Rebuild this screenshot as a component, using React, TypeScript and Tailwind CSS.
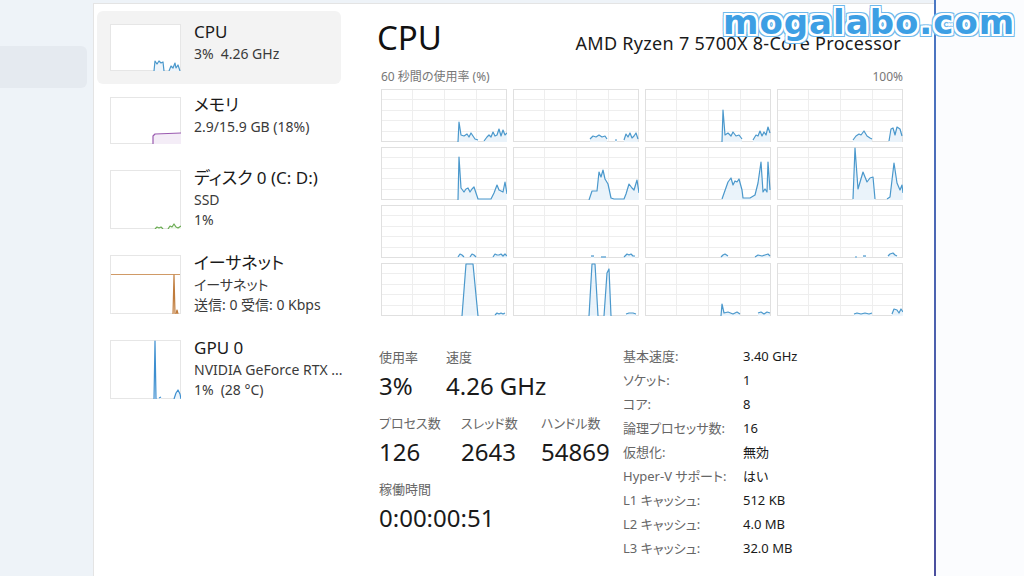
import React from 'react'

type Pt = [number, number]
type Seg = Pt[]

// per-core history, cell space 126 x 53 (y = 53 is 0%)
const CORES: Seg[][] = [
  [
    [[77, 53], [78, 33], [80, 46], [83, 47], [86, 45], [88, 48], [90, 44], [92, 47], [94, 50], [97, 51]],
    [[103, 52], [106, 48], [108, 46], [110, 48], [112, 43], [114, 47], [116, 46], [118, 40], [120, 47], [122, 41], [124, 46], [126, 44]],
  ],
  [
    [[77, 50], [80, 47], [83, 48], [86, 46], [89, 48], [92, 47], [94, 50]],
    [[102, 51], [104, 51]],
    [[111, 51], [113, 45], [115, 48], [117, 44], [119, 49], [121, 47], [123, 44], [125, 50]],
  ],
  [
    [[77, 53], [78, 21], [80, 46], [83, 44], [86, 47], [88, 43], [91, 47], [94, 46], [97, 50]],
    [[108, 51], [111, 46], [113, 47], [115, 42], [117, 47], [119, 43], [121, 46], [123, 38], [125, 44]],
  ],
  [
    [[76, 51], [79, 47], [82, 45], [84, 46], [87, 42], [90, 47], [93, 49], [95, 50]],
    [[112, 52], [114, 40], [116, 39], [118, 46], [120, 38], [123, 40], [125, 47]],
  ],
  [
    [[77, 53], [78, 10], [80, 41], [83, 45], [85, 42], [87, 41], [89, 45], [91, 42], [93, 40], [95, 46], [97, 52], [110, 52], [113, 46], [116, 38], [118, 43], [120, 44], [122, 45], [124, 35], [126, 47]],
  ],
  [
    [[76, 53], [79, 44], [84, 44], [86, 25], [88, 30], [90, 23], [92, 32], [95, 37], [98, 51], [101, 52], [111, 52], [113, 47], [116, 37], [119, 41], [121, 43], [124, 33], [126, 46]],
  ],
  [
    [[77, 52], [83, 35], [86, 31], [88, 38], [90, 34], [92, 35], [94, 32], [97, 43], [98, 51], [105, 51], [110, 48], [113, 36], [116, 15], [118, 45], [120, 42], [122, 45], [123, 15], [125, 43]],
  ],
  [
    [[76, 52], [78, 1], [81, 42], [86, 25], [90, 35], [93, 31], [96, 30], [98, 52]],
    [[110, 52], [113, 50], [117, 16], [120, 36], [123, 43], [125, 38], [126, 46]],
  ],
  [
    [[77, 52], [79, 49], [81, 50], [83, 52]],
    [[89, 52], [91, 49], [93, 50], [95, 52]],
    [[112, 52], [114, 49], [116, 50], [118, 50], [120, 49], [122, 51], [124, 49], [126, 51]],
  ],
  [
    [[78, 51], [81, 51]],
    [[88, 52], [93, 52]],
    [[111, 52], [114, 49], [116, 50], [118, 49], [120, 51], [122, 51]],
  ],
  [
    [[76, 52], [78, 50], [80, 49], [83, 51]],
    [[110, 52], [113, 50], [117, 51], [120, 50], [123, 49], [125, 51]],
  ],
  [
    [[78, 52], [80, 52]],
    [[86, 51], [89, 51]],
    [[111, 51], [113, 49], [116, 48], [118, 50], [120, 51]],
  ],
  [
    [[81, 53], [85, 1], [92, 1], [97, 53]],
    [[114, 52], [116, 50], [118, 51], [120, 50], [122, 51], [124, 50]],
  ],
  [
    [[76, 53], [79, 1], [82, 1], [85, 53]],
    [[91, 53], [94, 10], [96, 6], [98, 53]],
    [[113, 51], [116, 50], [120, 50], [123, 51]],
  ],
  [
    [[76, 53], [77, 41], [79, 50], [83, 49], [88, 51], [92, 49], [95, 51]],
    [[113, 50], [116, 49], [119, 51], [122, 49], [125, 50]],
  ],
  [
    [[77, 51], [80, 50], [84, 51], [88, 50], [92, 51], [95, 50]],
    [[115, 51], [117, 46], [120, 47], [122, 50], [124, 46], [126, 49]],
  ],
]

function Trace({ segs, h, stroke, fill }: { segs: Seg[]; h: number; stroke: string; fill: string }) {
  return (
    <>
      {segs.map((s, i) => {
        const line = s.map((p) => p.join(',')).join(' ')
        const area = `${s[0][0]},${h} ${line} ${s[s.length - 1][0]},${h}`
        return (
          <g key={i}>
            <polygon points={area} fill={fill} />
            <polyline points={line} fill="none" stroke={stroke} strokeWidth={1.2} strokeLinejoin="round" />
          </g>
        )
      })}
    </>
  )
}

function CoreCell({ segs }: { segs: Seg[] }) {
  return (
    <svg width="126" height="53" viewBox="0 0 126 53" className="block">
      <rect x="0.5" y="0.5" width="125" height="52" fill="#fff" stroke="#e0e0e0" />
      {[31.5, 63.5, 95.5].map((x) => (
        <line key={x} x1={x} x2={x} y1="1" y2="52" stroke="#eeeeee" />
      ))}
      {[10.5, 21.5, 31.5, 42.5].map((y) => (
        <line key={y} x1="1" x2="125" y1={y} y2={y} stroke="#eeeeee" />
      ))}
      <Trace segs={segs} h={53} stroke="#4a98cc" fill="#eaf3fa" />
    </svg>
  )
}

interface Thumb {
  h: number
  stroke: string
  fill: string
  segs: Seg[]
  extra?: React.ReactNode
}

const ITEMS: { title: string; lines: React.ReactNode[]; thumb: Thumb; active?: boolean }[] = [
  {
    title: 'CPU',
    active: true,
    lines: [
      <span key="a" className="flex gap-[7px]">
        <span>3%</span>
        <span>4.26 GHz</span>
      </span>,
    ],
    thumb: {
      h: 47,
      stroke: '#4a98cc',
      fill: '#eef5fb',
      segs: [
        [[44, 47], [45, 37], [47, 40], [49, 37], [51, 39], [53, 38], [54, 47]],
        [[59, 47], [61, 42], [63, 44], [65, 39], [66, 44], [68, 41], [70, 47]],
      ],
    },
  },
  {
    title: 'メモリ',
    lines: ['2.9/15.9 GB (18%)'],
    thumb: {
      h: 47,
      stroke: '#9a5bb0',
      fill: '#f4edf7',
      segs: [[[43, 47], [43, 39], [45, 37], [71, 36]]],
    },
  },
  {
    title: 'ディスク 0 (C: D:)',
    lines: ['SSD', '1%'],
    thumb: {
      h: 59,
      stroke: '#6aab52',
      fill: '#f1f8ee',
      segs: [
        [[45, 59], [47, 57], [49, 58], [51, 57], [53, 59]],
        [[58, 59], [60, 56], [62, 57], [64, 54], [66, 57], [68, 58], [71, 56]],
      ],
    },
  },
  {
    title: 'イーサネット',
    lines: ['イーサネット', '送信: 0 受信: 0 Kbps'],
    thumb: {
      h: 59,
      stroke: '#c07c3c',
      fill: '#fbf3ec',
      segs: [
        [[63, 59], [64, 20], [65, 59]],
        [[66, 59], [67, 55], [68, 59]],
      ],
      extra: <line x1="1" x2="70" y1="19.5" y2="19.5" stroke="#d09a66" strokeWidth="1" />,
    },
  },
  {
    title: 'GPU 0',
    lines: [
      'NVIDIA GeForce RTX ...',
      <span key="g" className="flex gap-[7px]">
        <span>1%</span>
        <span>(28 °C)</span>
      </span>,
    ],
    thumb: {
      h: 59,
      stroke: '#3d8fd0',
      fill: '#eef5fb',
      segs: [
        [[44, 59], [45, 1], [46, 59]],
        [[49, 58], [51, 57]],
        [[64, 59], [66, 53], [68, 50], [70, 54], [71, 59]],
      ],
    },
  },
]

function SideItem({ item }: { item: (typeof ITEMS)[number] }) {
  const tall = item.thumb.h > 50
  return (
    <div
      className={`flex gap-[13px] rounded-md px-[13px] ${tall ? 'py-[12.5px]' : 'py-[13px]'} ${
        item.active ? 'bg-[#f3f3f3]' : ''
      }`}
    >
      <svg width="71" height={item.thumb.h} viewBox={`0 0 71 ${item.thumb.h}`} className="block shrink-0">
        <rect x="0.5" y="0.5" width="70" height={item.thumb.h - 1} fill="#fff" stroke="#e6e6e6" />
        {item.thumb.extra}
        <Trace segs={item.thumb.segs} h={item.thumb.h} stroke={item.thumb.stroke} fill={item.thumb.fill} />
      </svg>
      <div className="-mt-[4px] min-w-0">
        <div className="text-[17px] leading-[24px] text-[#1a1a1a]">{item.title}</div>
        {item.lines.map((l, i) => (
          <div key={i} className="whitespace-nowrap text-[14px] leading-[20px] text-[#3a3a3a]">
            {l}
          </div>
        ))}
      </div>
    </div>
  )
}

const SPECS: [string, string][] = [
  ['基本速度:', '3.40 GHz'],
  ['ソケット:', '1'],
  ['コア:', '8'],
  ['論理プロセッサ数:', '16'],
  ['仮想化:', '無効'],
  ['Hyper-V サポート:', 'はい'],
  ['L1 キャッシュ:', '512 KB'],
  ['L2 キャッシュ:', '4.0 MB'],
  ['L3 キャッシュ:', '32.0 MB'],
]

function Stat({ label, value, w }: { label: string; value: string; w: string }) {
  return (
    <div className={w}>
      <div className="text-[13px] leading-[22px] text-[#666]">{label}</div>
      <div className="whitespace-nowrap text-[24px] leading-[36px] text-[#1a1a1a]">{value}</div>
    </div>
  )
}

export default function App() {
  return (
    <div className="relative flex h-[576px] w-[1024px] overflow-hidden bg-[#eef3f8] font-['Noto_Sans','Noto_Sans_CJK_JP',sans-serif] [font-feature-settings:'palt']">
      {/* app nav rail */}
      <nav className="w-[93px] shrink-0 pt-[46px]">
        <div className="h-[42px] w-[87px] rounded-r-md bg-[#e5eaf0]" />
      </nav>

      {/* performance page */}
      <div className="mt-[3px] flex w-[841px] shrink-0 border-l border-t border-[#e4e4e4] bg-white">
        <aside className="w-[247px] shrink-0 pl-[3px] pt-[7px]">
          {ITEMS.map((it) => (
            <SideItem key={it.title} item={it} />
          ))}
        </aside>

        <main className="flex-1 pl-[40px] pt-[14px]">
          <div className="flex w-[522px] items-baseline justify-between">
            <h1 className="-ml-[4px] text-[33px] leading-[40px] text-[#111]">CPU</h1>
            <div className="pr-[2px] text-[18px] tracking-[0.3px] text-[#1a1a1a]">AMD Ryzen 7 5700X 8-Core Processor</div>
          </div>
          <div className="mt-[11px] flex w-[522px] justify-between text-[12px] leading-[16px] text-[#777]">
            <span>60 秒間の使用率 (%)</span>
            <span>100%</span>
          </div>
          <div className="mt-[4px] grid w-[522px] grid-cols-4 gap-x-[6px] gap-y-[5px]">
            {CORES.map((c, i) => (
              <CoreCell key={i} segs={c} />
            ))}
          </div>

          <div className="-ml-[2px] mt-[30px] flex">
            <div className="flex w-[244px] flex-col gap-[8px]">
              <div className="flex">
                <Stat label="使用率" value="3%" w="w-[67px]" />
                <Stat label="速度" value="4.26 GHz" w="w-[100px]" />
              </div>
              <div className="flex">
                <Stat label="プロセス数" value="126" w="w-[82px]" />
                <Stat label="スレッド数" value="2643" w="w-[80px]" />
                <Stat label="ハンドル数" value="54869" w="w-[80px]" />
              </div>
              <Stat label="稼働時間" value="0:00:00:51" w="w-[200px]" />
            </div>
            <div className="-mt-[2px] text-[13px] leading-[24px]">
              {SPECS.map(([k, v]) => (
                <div key={k} className="flex">
                  <span className="w-[120px] text-[#666]">{k}</span>
                  <span className="text-[#1a1a1a]">{v}</span>
                </div>
              ))}
            </div>
          </div>
        </main>
      </div>

      <div className="w-[2px] shrink-0 bg-gradient-to-b from-[#4a78c4] to-[#4b4f9e]" />
      <div className="flex-1 bg-[#fbfcfe]" />

      {/* site watermark */}
      <div className="absolute left-[723px] top-[5px] font-['DejaVu_Sans',sans-serif] text-[34px] font-bold leading-[34px] tracking-[1px] text-[#3d9fe4] [text-shadow:2px_0_0_#fff,-2px_0_0_#fff,0_2px_0_#fff,0_-2px_0_#fff,2px_2px_0_#fff,-2px_-2px_0_#fff,2px_-2px_0_#fff,-2px_2px_0_#fff,3px_0_0_#6fb9ec,-3px_0_0_#6fb9ec,0_3px_0_#6fb9ec,0_-3px_0_#6fb9ec,3px_3px_0_#6fb9ec,-3px_-3px_0_#6fb9ec,3px_-3px_0_#6fb9ec,-3px_3px_0_#6fb9ec]">
        mogalabo.com
      </div>
    </div>
  )
}
